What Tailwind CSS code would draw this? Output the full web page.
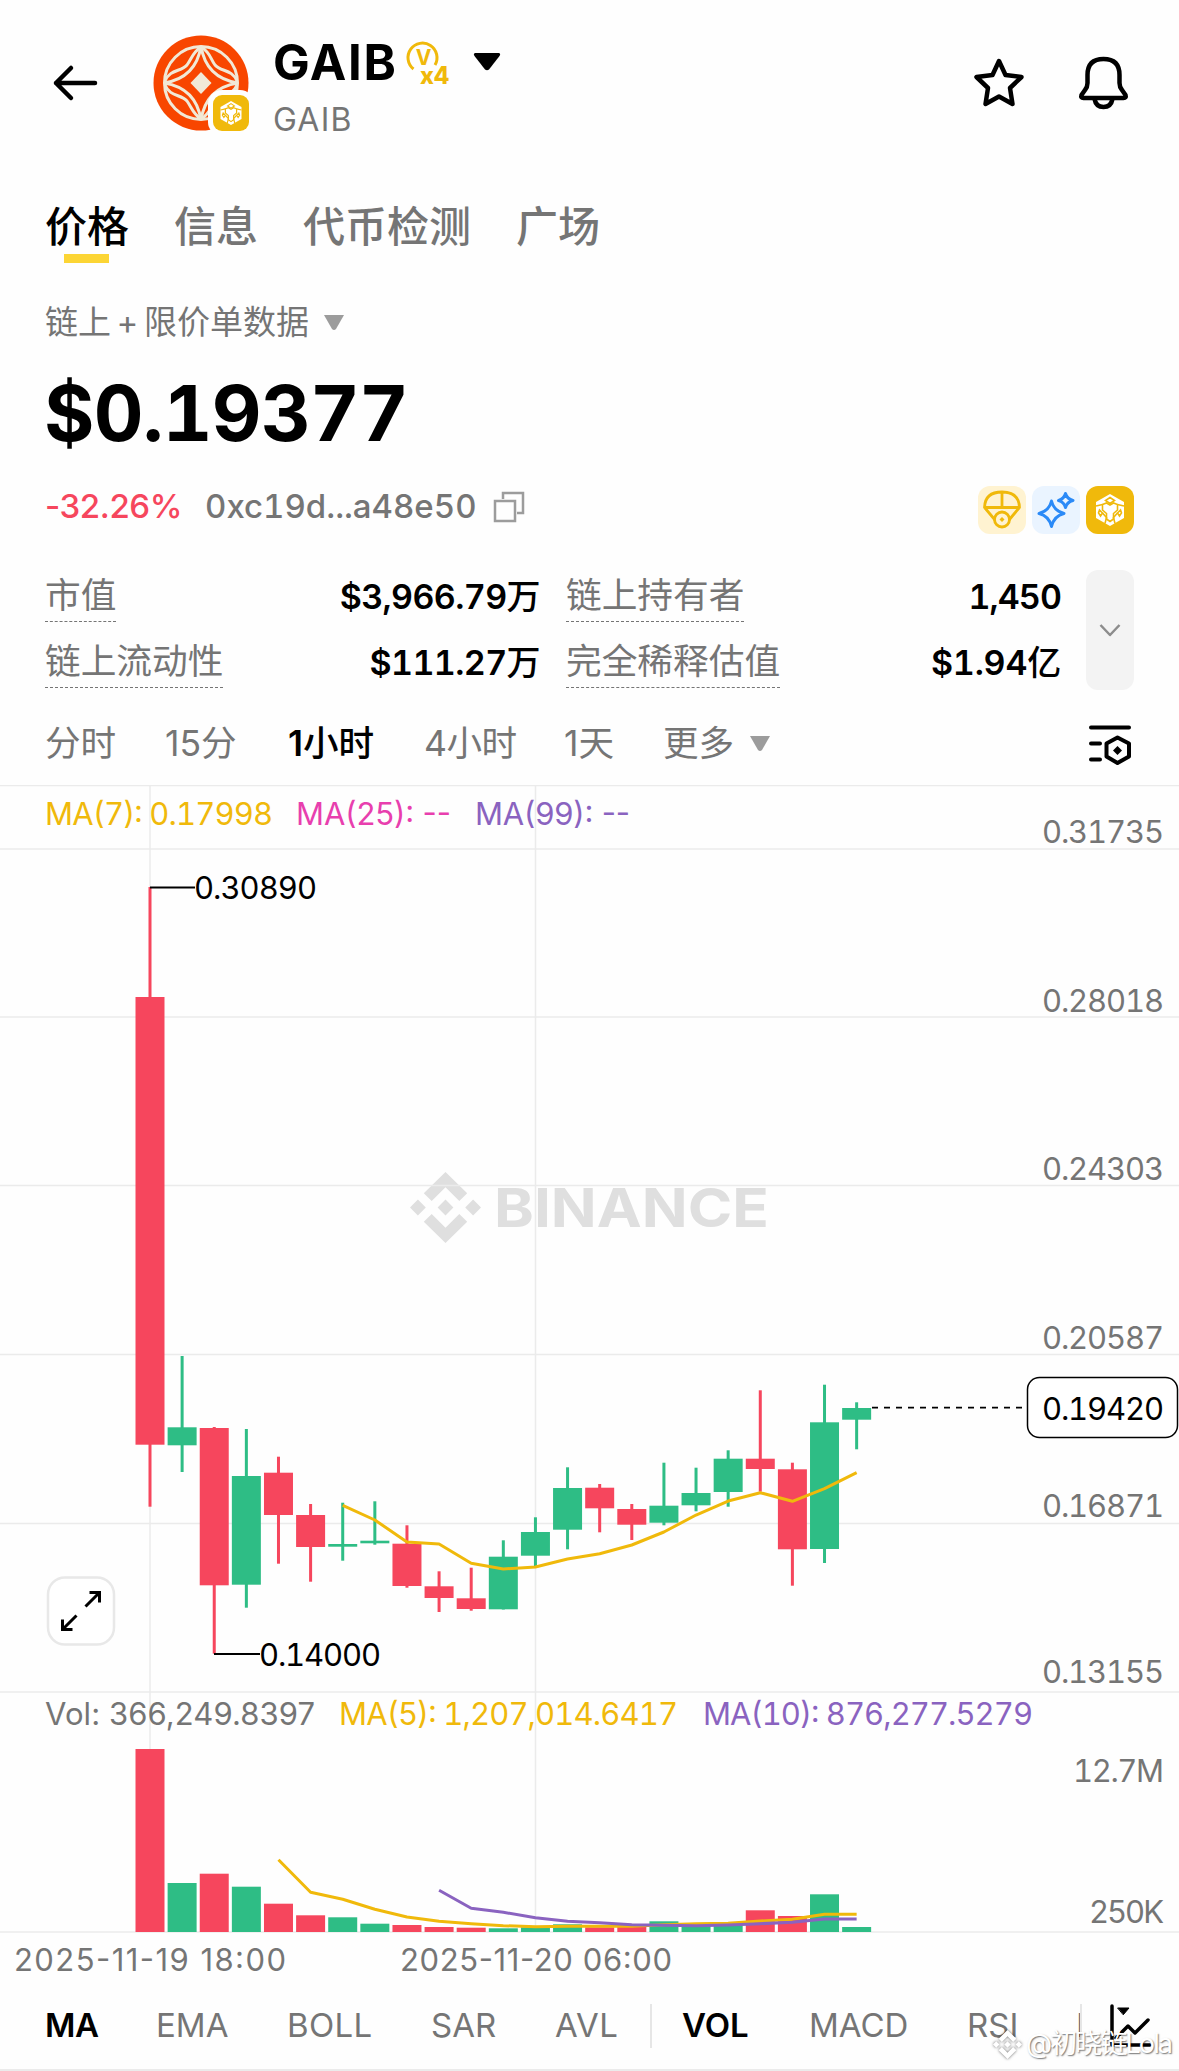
<!DOCTYPE html>
<html lang="zh-CN">
<head>
  <meta charset="UTF-8" />
  <meta name="viewport" content="width=device-width, initial-scale=1.0"/>
  <title>GAIB</title>
  <script src="https://cdn.jsdelivr.net/npm/@tailwindcss/browser@4"></script>
</head>
<body class="bg-[#fefefe] text-black tabular-nums font-['Inter','Noto_Sans_CJK_SC',sans-serif]">
<div class="relative w-[1179px] h-[2071px] overflow-hidden">

  <!-- Shared symbols -->
  <svg class="hidden">
    <symbol id="bnb" viewBox="0 0 48 48">
      <path d="M24 8 38 16V32L24 40 10 32V16Z" fill="#fff"/>
      <g fill="none" stroke="#f0b90b" stroke-width="1.600">
        <path d="M16.500 18.500 20.500 17 24 19 27.500 17 31.500 18.500V24L27.500 27.500V33L24 35.500 20.500 33V27.500L16.500 24Z"/>
        <path d="M24 11.500 28.500 14.500 24 17.500 19.500 14.500ZM13.500 24 16.500 27 14.500 30 12.500 27ZM34.500 24 31.500 27 33.500 30 35.500 27Z"/>
        <path d="M10 20 16.500 18.500M38 20 31.500 18.500M16.500 27 20.500 31.500 19 37.500M31.500 27 27.500 31.500 29 37.500"/>
      </g>
    </symbol>
    <symbol id="binance" viewBox="0 0 72 72">
      <path d="M36 0 58 21.500 50 29.500 36 15.500 22 29.500 14 21.500ZM36 72 58 50.500 50 42.500 36 56.500 22 42.500 14 50.500ZM0 36 8 28 16 36 8 44ZM56 36 64 28 72 36 64 44ZM28 36 36 28 44 36 36 44Z"/>
    </symbol>
  </svg>

  <!-- Header -->
  <header class="flex h-[181px] pl-[52px] pr-[50px]">
    <svg class="mt-[64px] w-[46px] h-[38px]" viewBox="0 0 46 38" fill="none" stroke="#000" stroke-width="4.500" stroke-linecap="round" stroke-linejoin="round"><path d="M43 19H4M19 4 4 19 19 34"/></svg>
    <div class="relative ml-[55px] mt-[35px] w-[96px] h-[96px]">
      <svg class="w-[96px] h-[96px]" viewBox="0 0 96 96" fill="none">
        <circle cx="48" cy="48" r="47.500" fill="#f84600"/>
        <g stroke="#f1e9d6" stroke-width="3">
          <circle cx="48" cy="48" r="36.500"/>
          <path d="M48 11Q53 43 85 48Q53 53 48 85Q43 53 11 48Q43 43 48 11Z"/>
          <path d="M48 12C40 17 39 23 34 30C28 37 17 34 12 46M48 12C57 17 57 23 62 30C68 37 79 34 84 46M48 84C40 79 39 73 34 66C28 59 17 62 12 50M48 84C57 79 57 73 62 66C68 59 79 62 84 50"/>
        </g>
        <path d="M48 37 58.500 48 48 59 37.500 48Z" fill="#f1e9d6"/>
      </svg>
      <div class="absolute left-[55px] top-[55px] w-[46px] h-[46px] rounded-[14px] bg-[#fefefe] p-[5px]">
        <svg class="w-9 h-9 rounded-[9px] bg-[#f0b90b]"><use href="#bnb" width="36" height="36"/></svg>
      </div>
    </div>
    <div class="ml-[24px] mt-[37px]">
      <div class="flex">
        <h1 class="text-[49px] leading-[52px] font-bold tracking-[1.6px]">GAIB</h1>
        <svg class="ml-[8px] mt-[3px] w-[46px] h-[46px] overflow-visible" viewBox="0 0 46 46" fill="none">
          <path d="M8.500 29A14.500 14.500 0 1 1 30 25" stroke="#f0b90b" stroke-width="3"/>
          <text x="18.500" y="25" text-anchor="middle" font-size="21" font-weight="700" fill="#f0b90b">V</text>
          <text x="15" y="43.500" font-size="24" font-weight="800" fill="#f0b90b" textLength="29" lengthAdjust="spacingAndGlyphs">x4</text>
        </svg>
        <svg class="ml-[22px] mt-[16px] w-7 h-[18px]" viewBox="0 0 28 18"><path d="M2 0H26Q28 1 26.500 3L16 16.500Q14 18 12 16.500L1.500 3Q0 1 2 0Z"/></svg>
      </div>
      <div class="mt-[11px] text-[32px] leading-10 tracking-[1.2px] text-[#757575]">GAIB</div>
    </div>
    <div class="ml-auto flex gap-[52px]">
      <svg class="mt-[57px] w-[52px] h-[52px]" viewBox="0 0 52 52" fill="none" stroke="#000" stroke-width="4.500" stroke-linejoin="round"><path d="M26 4 32.500 18 48.500 20 37 31 39.500 47 26 39.500 12.500 47 15 31 3.500 20 19.500 18Z"/></svg>
      <svg class="mt-[56px] w-[52px] h-[54px]" viewBox="0 0 52 54" fill="none" stroke="#000" stroke-width="4.500" stroke-linejoin="round"><path d="M10.500 19Q10.500 3 26.500 3Q42.500 3 42.500 19V27Q42.500 31 45 34L48.500 39Q49.500 42 46.500 42H6.500Q3.500 42 4.500 39L8 34Q10.500 31 10.500 27ZM17.500 43Q19 51 26.500 51Q34 51 35.500 43"/></svg>
    </div>
  </header>

  <!-- Page tabs -->
  <nav class="flex h-[84px] gap-[45px] pl-[45px] text-[42px] leading-[92px] font-medium text-[#757575]">
    <div class="relative text-black">价格<span class="absolute left-[19px] top-[73px] w-[45px] h-[9px] bg-[#fcd535]"></span></div>
    <div>信息</div>
    <div>代币检测</div>
    <div>广场</div>
  </nav>

  <!-- Price -->
  <section class="px-[45px]">
    <div class="flex items-center h-[115px] text-[33px] text-[#757575]">
      <span class="[word-spacing:-3px]">链上 + 限价单数据</span>
      <svg class="ml-[14px] w-[22px] h-4" viewBox="0 0 22 16"><path d="M1 0H21L13 14Q11 16 9 14Z" fill="#9c9c9c"/></svg>
    </div>
    <div class="h-[66px] -ml-px text-[77px] leading-[66px] font-bold tracking-[-0.7px]">$0.19377</div>
    <div class="flex items-center mt-[29px] h-[64px] text-[33px] font-medium">
      <span class="w-[160px] proportional-nums tracking-[-0.4px] text-[#f6465d]">-32.26%</span>
      <span class="text-[#757575]">0xc19d...a48e50</span>
      <svg class="ml-[16px] w-8 h-8" viewBox="0 0 32 32" fill="none" stroke="#9c9c9c" stroke-width="2.500"><path d="M2 10H22V30H2ZM10 8V2H30V22H24"/></svg>
      <div class="ml-auto mt-[5px] flex gap-1.5">
        <svg class="w-12 h-12 rounded-xl bg-[#fff3d1]" viewBox="0 0 48 48" fill="none" stroke="#f0b90b" stroke-width="2.800" stroke-linejoin="round">
          <path d="M6.500 21.500Q7 6 24 6Q41 6 41.500 21.500ZM24 6V21.500M7 22 17 34M41 22 31 34"/>
          <circle cx="24" cy="33.500" r="7.500"/><path d="M24 31 26.500 33.500 24 36 21.500 33.500Z" fill="#f0b90b" stroke="none"/>
        </svg>
        <svg class="w-12 h-12 rounded-xl bg-[#eaf4ff]" viewBox="0 0 48 48" fill="none" stroke="#2b8af7" stroke-width="3" stroke-linejoin="round">
          <path d="M19.500 15Q22 25 32 27.500Q22 30 19.500 40.500Q17 30 7 27.500Q17 25 19.500 15ZM33.500 7.500Q35 13 41 14.500Q35 16 33.500 21.500Q32 16 26.500 14.500Q32 13 33.500 7.500Z"/>
        </svg>
        <svg class="w-12 h-12 rounded-xl bg-[#f0b90b]"><use href="#bnb" width="48" height="48"/></svg>
      </div>
    </div>
  </section>

  <!-- Token stats -->
  <section class="flex h-[133px] mt-[31px] pl-[45px] pr-[45px]">
    <div class="grid grid-cols-[495px_495px] gap-x-[26px] grid-rows-[66px_66px] w-[1016px] text-[35.700px]">
      <div class="flex justify-between">
        <span class="h-[52px] leading-[50px] text-[#757575] border-b border-dashed border-[#757575]">市值</span>
        <span class="leading-[54px] text-[34px] font-semibold tracking-[-0.6px]">$3,966.79<b class="font-medium">万</b></span>
      </div>
      <div class="flex justify-between">
        <span class="h-[52px] leading-[50px] text-[#757575] border-b border-dashed border-[#757575]">链上持有者</span>
        <span class="leading-[54px] text-[34px] font-semibold tracking-[-0.9px]">1,450</span>
      </div>
      <div class="flex justify-between">
        <span class="h-[52px] leading-[50px] text-[#757575] border-b border-dashed border-[#757575]">链上流动性</span>
        <span class="leading-[54px] text-[34px] font-semibold tracking-[-0.6px]">$111.27<b class="font-medium">万</b></span>
      </div>
      <div class="flex justify-between">
        <span class="h-[52px] leading-[50px] text-[#757575] border-b border-dashed border-[#757575]">完全稀释估值</span>
        <span class="leading-[54px] text-[34px] font-semibold tracking-[-0.2px]">$1.94<b class="font-medium">亿</b></span>
      </div>
    </div>
    <div class="ml-auto flex items-center justify-center w-12 h-[120px] rounded-xl bg-[#f3f3f3]">
      <svg class="w-[22px] h-[14px]" viewBox="0 0 22 14" fill="none" stroke="#8c8c8c" stroke-width="2.500" stroke-linejoin="round"><path d="M1.500 2 11 12 20.500 2"/></svg>
    </div>
  </section>

  <!-- Intervals -->
  <nav class="flex items-center h-[82px] pl-[45px] pr-[47px] text-[35.600px] proportional-nums text-[#757575]">
    <div class="w-[120px]">分时</div>
    <div class="w-[123px]">15分</div>
    <div class="w-[136px] font-semibold text-black">1<span class="font-medium">小时</span></div>
    <div class="w-[140px] tracking-[-0.5px]">4小时</div>
    <div class="w-[99px]">1天</div>
    <div>更多</div>
    <svg class="ml-[15px] w-[22px] h-4" viewBox="0 0 22 16"><path d="M1 0H21L13 14Q11 16 9 14Z" fill="#9c9c9c"/></svg>
    <svg class="ml-auto mt-px w-11 h-10" viewBox="0 0 44 40" fill="none" stroke="#000" stroke-width="4" stroke-linecap="round" stroke-linejoin="round"><path d="M3 2.500H41M3 18.500H12M3 34.500H12"/><path d="M29.500 12.500 41 18.500V31.500L29.500 38 18.500 31.500V18.500Z"/><path d="M29.500 21 34 25.500 29.500 30 25 25.500Z" fill="#000" stroke="none"/></svg>
  </nav>

  <!-- Chart, drawn in page coordinates -->
  <svg id="chart" class="block w-[1179px] h-[1204px]" viewBox="0 785 1179 1204" font-size="31" fill="#757575">
    <g fill="#dfdfdf">
      <use href="#binance" x="410" y="1172" width="71" height="71"/>
      <text x="494" y="1227" font-size="54" font-weight="700" textLength="275" lengthAdjust="spacingAndGlyphs">BINANCE</text>
    </g>
    <g stroke="#ebebeb" stroke-width="1.500">
      <path d="M0 785.500H1179M0 849H1179M0 1017H1179M0 1185.500H1179M0 1354.500H1179M0 1523.500H1179M0 1692H1179M0 1932H1179M150 785V1932M535.500 785V1932"/>
    </g>
    <g id="bars"></g>
    <g id="lines" fill="none" stroke-width="3" stroke-linejoin="round"></g>

    <text x="45" y="824.500" textLength="228" fill="#f0b90b">MA(7): 0.17998</text>
    <text class="proportional-nums" x="296" y="824.500" textLength="155" fill="#e83fae">MA(25): --</text>
    <text class="proportional-nums" x="475" y="824.500" textLength="155" fill="#8a63c0">MA(99): --</text>

    <g text-anchor="end">
      <text x="1164" y="843" textLength="122">0.31735</text>
      <text x="1164" y="1012" textLength="122">0.28018</text>
      <text x="1164" y="1180" textLength="122">0.24303</text>
      <text x="1164" y="1349" textLength="122">0.20587</text>
      <text x="1164" y="1517" textLength="122">0.16871</text>
      <text x="1164" y="1683" textLength="122">0.13155</text>
      <text x="1164" y="1782" textLength="91">12.7M</text>
      <text x="1164" y="1923" textLength="75">250K</text>
    </g>

    <!-- High / low markers -->
    <g fill="#000">
      <path d="M150 887.500H195M214 1654H260" stroke="#000" stroke-width="1.800"/>
      <text x="194" y="899" textLength="123">0.30890</text>
      <text x="259" y="1665.500" textLength="122">0.14000</text>
    </g>

    <!-- Last price -->
    <path d="M872 1407.700H1024" stroke="#000" stroke-width="1.800" stroke-dasharray="6 6"/>
    <rect x="1027.500" y="1377.500" width="150" height="60" rx="12" fill="#fff" stroke="#000" stroke-width="1.500"/>
    <text x="1042" y="1420" textLength="122" fill="#000">0.19420</text>

    <!-- Fullscreen button -->
    <rect x="48" y="1577.500" width="66" height="67" rx="17" fill="#fff" stroke="#e8e8e8" stroke-width="2.500"/>
    <path d="M85.500 1606.500 99.500 1592.500M89.500 1592.500H99.500V1602.500M76.500 1615.500 62.500 1629.500M72.500 1629.500H62.500V1619.500" fill="none" stroke="#000" stroke-width="3"/>

    <text class="proportional-nums" x="45" y="1725" textLength="270">Vol: 366,249.8397</text>
    <text x="339" y="1725" textLength="339" fill="#f0b90b">MA(5): 1,207,014.6417</text>
    <text x="703" y="1725" textLength="330" fill="#8a63c0">MA(10): 876,277.5279</text>
    <text class="proportional-nums" x="14" y="1971" textLength="272">2025-11-19 18:00</text>
    <text class="proportional-nums" x="400" y="1971" textLength="272">2025-11-20 06:00</text>
  </svg>

  <!-- Indicators -->
  <nav class="flex items-center h-[82px] pb-[7px] text-[33px] text-[#757575] pl-[45px] border-b-2 border-[#ebebeb]">
    <div class="w-[111px] font-semibold text-black tracking-[-0.5px]">MA</div>
    <div class="w-[131px]">EMA</div>
    <div class="w-[144px] tracking-[0.3px]">BOLL</div>
    <div class="w-[124px]">SAR</div>
    <div class="w-[95px] tracking-[0.5px]">AVL</div>
    <div class="w-[2px] h-11 bg-[#e6e6e6]"></div>
    <div class="ml-[30px] w-[127px] font-semibold text-black">VOL</div>
    <div class="w-[158px]">MACD</div>
    <div class="w-[109px]">RSI</div>
    <div class="w-[4px] overflow-hidden">I</div>
    <div class="w-[2px] h-11 bg-[#e6e6e6]"></div>
    <svg class="ml-[27px] w-[44px] h-[44px]" viewBox="0 0 44 44" fill="none" stroke="#000" stroke-width="3.500" stroke-linecap="round" stroke-linejoin="round"><path d="M3 2V41H41M7 34 19 22 26 29 39 16"/><path d="M9 4H20L14.500 10.500Z" fill="#000" stroke-width="1"/></svg>
  </nav>

  <!-- Author mark -->
  <div class="absolute left-[993px] top-[2024px] flex items-center h-10 text-[27px] text-white">
    <svg class="w-[29px] h-[29px] drop-shadow-[0_0_1.5px_rgba(0,0,0,0.6)]" fill="#fff"><use href="#binance" width="29" height="29"/></svg>
    <span class="ml-1 tracking-[-1.9px] whitespace-nowrap [text-shadow:1px_1px_1.5px_rgba(0,0,0,0.55)]">@初晓链Lola</span>
  </div>
</div>

<script>
  const RED = "#f6465d", GREEN = "#2ebd85";
  const x = i => 150 + i * 32.12;

  // [color, high, body top, body bottom, low, volume top]
  const candles = [
    [RED, 887, 997, 1444.7, 1506.7, 1749],
    [GREEN, 1356, 1427.3, 1445.3, 1472, 1883],
    [RED, 1427, 1428, 1585.3, 1653.7, 1873.7],
    [GREEN, 1429, 1476, 1584.7, 1607.7, 1886.7],
    [RED, 1456.7, 1472.7, 1515, 1563.7, 1903.7],
    [RED, 1504, 1515, 1547, 1581.7, 1915.3],
    [GREEN, 1502.7, 1544, 1546.7, 1560.7, 1917.3],
    [GREEN, 1501.3, 1540.7, 1543.3, 1544.7, 1923.7],
    [RED, 1525.3, 1543.7, 1586, 1587.7, 1925],
    [RED, 1571.3, 1586.3, 1598, 1612, 1927],
    [RED, 1567.7, 1598.3, 1609, 1610.7, 1927.7],
    [GREEN, 1540.3, 1556.7, 1609.3, 1609.5, 1928.3],
    [GREEN, 1517.3, 1532, 1555.7, 1567.7, 1927.3],
    [GREEN, 1467.3, 1488, 1529.7, 1549.3, 1924.3],
    [RED, 1484, 1487.7, 1508.3, 1532.3, 1927.3],
    [RED, 1504, 1509, 1524.7, 1540, 1926.7],
    [GREEN, 1462.7, 1505.7, 1522.7, 1525.3, 1921.3],
    [GREEN, 1467.7, 1493, 1505.3, 1511.3, 1926],
    [GREEN, 1450.3, 1458.7, 1492, 1506.7, 1925.3],
    [RED, 1390.3, 1458.7, 1469, 1491.7, 1910.3],
    [RED, 1462.7, 1469.3, 1549.3, 1585.7, 1916],
    [GREEN, 1384.7, 1422.3, 1549, 1563, 1894.3],
    [GREEN, 1402.3, 1408, 1419.7, 1449.3, 1927]
  ];

  document.getElementById("bars").innerHTML = candles.map(([c, hi, top, bot, lo, vol], i) => `
    <rect x="${x(i) - 1.5}" y="${hi}" width="3" height="${lo - hi}" fill="${c}"/>
    <rect x="${x(i) - 14.5}" y="${top}" width="29" height="${bot - top}" fill="${c}"/>
    <rect x="${x(i) - 14.5}" y="${vol}" width="29" height="${1932 - vol}" fill="${c}"/>`).join("");

  // [color, first candle, y values]
  const averages = [
    ["#f0b90b", 6, [1505.3, 1520, 1542, 1544, 1563.3, 1569, 1567, 1559, 1553.7, 1545, 1532, 1515, 1501, 1492.7, 1501.3, 1488.7, 1472.7]],
    ["#f0b90b", 4, [1859.7, 1892.3, 1899.3, 1909.3, 1917, 1921.3, 1923.7, 1925.7, 1926.7, 1926.3, 1926.3, 1926.3, 1924.7, 1923.7, 1923.3, 1921, 1919.3, 1914.3, 1914.3]],
    ["#8a63c0", 9, [1890.3, 1908.3, 1912.3, 1917.7, 1921.3, 1922.7, 1924.7, 1925.3, 1925.7, 1925, 1923.7, 1922.3, 1919, 1919]]
  ];

  document.getElementById("lines").innerHTML = averages.map(([c, start, ys]) =>
    `<polyline stroke="${c}" points="${ys.map((y, i) => `${x(start + i)},${y}`).join(" ")}"/>`).join("");
</script>
</body>
</html>
